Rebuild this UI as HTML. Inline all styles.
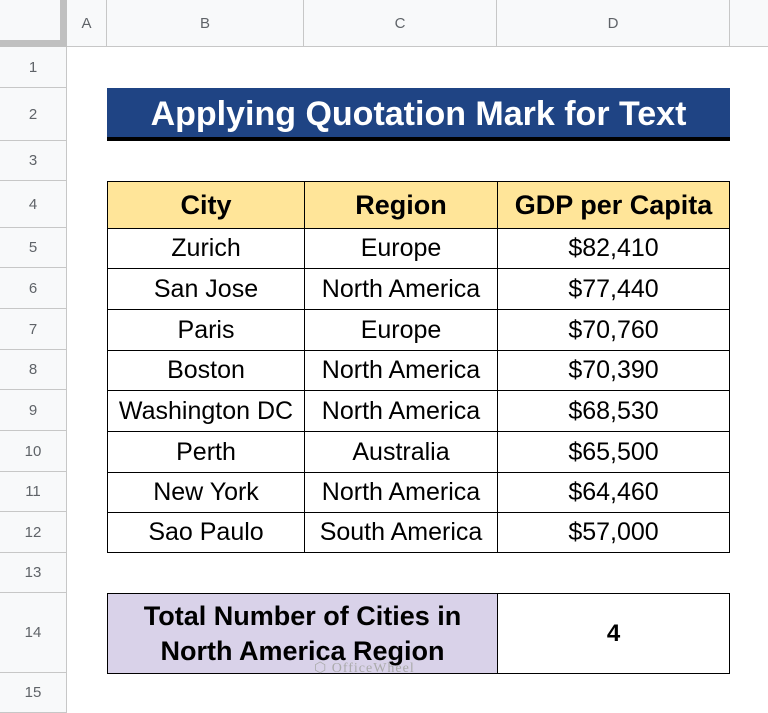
<!DOCTYPE html><html><head><style>
body{margin:0;width:768px;height:710px;overflow:hidden;background:#fff;font-family:"Liberation Sans",Arial,sans-serif;position:relative}
div{position:absolute;box-sizing:border-box}
.ch{top:0;height:47px;background:#f8f9fa;border-right:1px solid #c7c7c7;border-bottom:1px solid #c7c7c7;color:#5f6368;font-size:15px;display:flex;align-items:center;justify-content:center}
.rh{left:0;width:67px;background:#f8f9fa;border-bottom:1px solid #c7c7c7;border-right:1px solid #c7c7c7;color:#5f6368;font-size:15px;display:flex;align-items:center;justify-content:center}
.c{display:flex;align-items:center;justify-content:center;font-size:25px;color:#000;border:1px solid #000;white-space:nowrap}
.h{background:#ffe599;font-weight:bold;font-size:27px}
</style></head><body>
<div class="ch" style="left:0;width:67px;border-right:7px solid #c0c0c0;border-bottom:7px solid #c0c0c0"></div>
<div class="ch" style="left:67px;width:40px">A</div>
<div class="ch" style="left:107px;width:197px">B</div>
<div class="ch" style="left:304px;width:193px">C</div>
<div class="ch" style="left:497px;width:233px">D</div>
<div class="ch" style="left:730px;width:40px"></div>
<div class="rh" style="top:47px;height:41px">1</div>
<div class="rh" style="top:88px;height:53px">2</div>
<div class="rh" style="top:141px;height:40px">3</div>
<div class="rh" style="top:181px;height:47px">4</div>
<div class="rh" style="top:228px;height:40px">5</div>
<div class="rh" style="top:268px;height:41px">6</div>
<div class="rh" style="top:309px;height:41px">7</div>
<div class="rh" style="top:350px;height:40px">8</div>
<div class="rh" style="top:390px;height:41px">9</div>
<div class="rh" style="top:431px;height:41px">10</div>
<div class="rh" style="top:472px;height:40px">11</div>
<div class="rh" style="top:512px;height:41px">12</div>
<div class="rh" style="top:553px;height:40px">13</div>
<div class="rh" style="top:593px;height:80px">14</div>
<div class="rh" style="top:673px;height:40px">15</div>
<div style="left:107px;top:88px;width:623px;height:53px;background:#1f4484;border-bottom:4px solid #000;color:#fff;font-weight:bold;font-size:34px;display:flex;align-items:center;justify-content:center;padding-top:3px">Applying Quotation Mark for Text</div>
<div class="c h" style="left:107px;top:181px;width:198px;height:48px">City</div>
<div class="c h" style="left:304px;top:181px;width:194px;height:48px">Region</div>
<div class="c h" style="left:497px;top:181px;width:233px;height:48px">GDP per Capita</div>
<div class="c" style="left:107px;top:228px;width:198px;height:41px">Zurich</div><div class="c" style="left:304px;top:228px;width:194px;height:41px">Europe</div><div class="c" style="left:497px;top:228px;width:233px;height:41px">$82,410</div>
<div class="c" style="left:107px;top:268px;width:198px;height:42px">San Jose</div><div class="c" style="left:304px;top:268px;width:194px;height:42px">North America</div><div class="c" style="left:497px;top:268px;width:233px;height:42px">$77,440</div>
<div class="c" style="left:107px;top:309px;width:198px;height:42px">Paris</div><div class="c" style="left:304px;top:309px;width:194px;height:42px">Europe</div><div class="c" style="left:497px;top:309px;width:233px;height:42px">$70,760</div>
<div class="c" style="left:107px;top:350px;width:198px;height:41px">Boston</div><div class="c" style="left:304px;top:350px;width:194px;height:41px">North America</div><div class="c" style="left:497px;top:350px;width:233px;height:41px">$70,390</div>
<div class="c" style="left:107px;top:390px;width:198px;height:42px">Washington DC</div><div class="c" style="left:304px;top:390px;width:194px;height:42px">North America</div><div class="c" style="left:497px;top:390px;width:233px;height:42px">$68,530</div>
<div class="c" style="left:107px;top:431px;width:198px;height:42px">Perth</div><div class="c" style="left:304px;top:431px;width:194px;height:42px">Australia</div><div class="c" style="left:497px;top:431px;width:233px;height:42px">$65,500</div>
<div class="c" style="left:107px;top:472px;width:198px;height:41px">New York</div><div class="c" style="left:304px;top:472px;width:194px;height:41px">North America</div><div class="c" style="left:497px;top:472px;width:233px;height:41px">$64,460</div>
<div class="c" style="left:107px;top:512px;width:198px;height:41px">Sao Paulo</div><div class="c" style="left:304px;top:512px;width:194px;height:41px">South America</div><div class="c" style="left:497px;top:512px;width:233px;height:41px">$57,000</div>
<div class="c" style="left:107px;top:593px;width:391px;height:81px;background:#d9d2e9;font-weight:bold;font-size:27px;text-align:center;line-height:35px">Total Number of Cities in<br>North America Region</div>
<div class="c" style="left:497px;top:593px;width:233px;height:81px;font-weight:bold;font-size:24px">4</div>
<div style="left:314px;top:660px;color:#aaa;font-size:14px;font-family:'Liberation Serif',serif;letter-spacing:1px">⬡ OfficeWheel</div>
</body></html>
